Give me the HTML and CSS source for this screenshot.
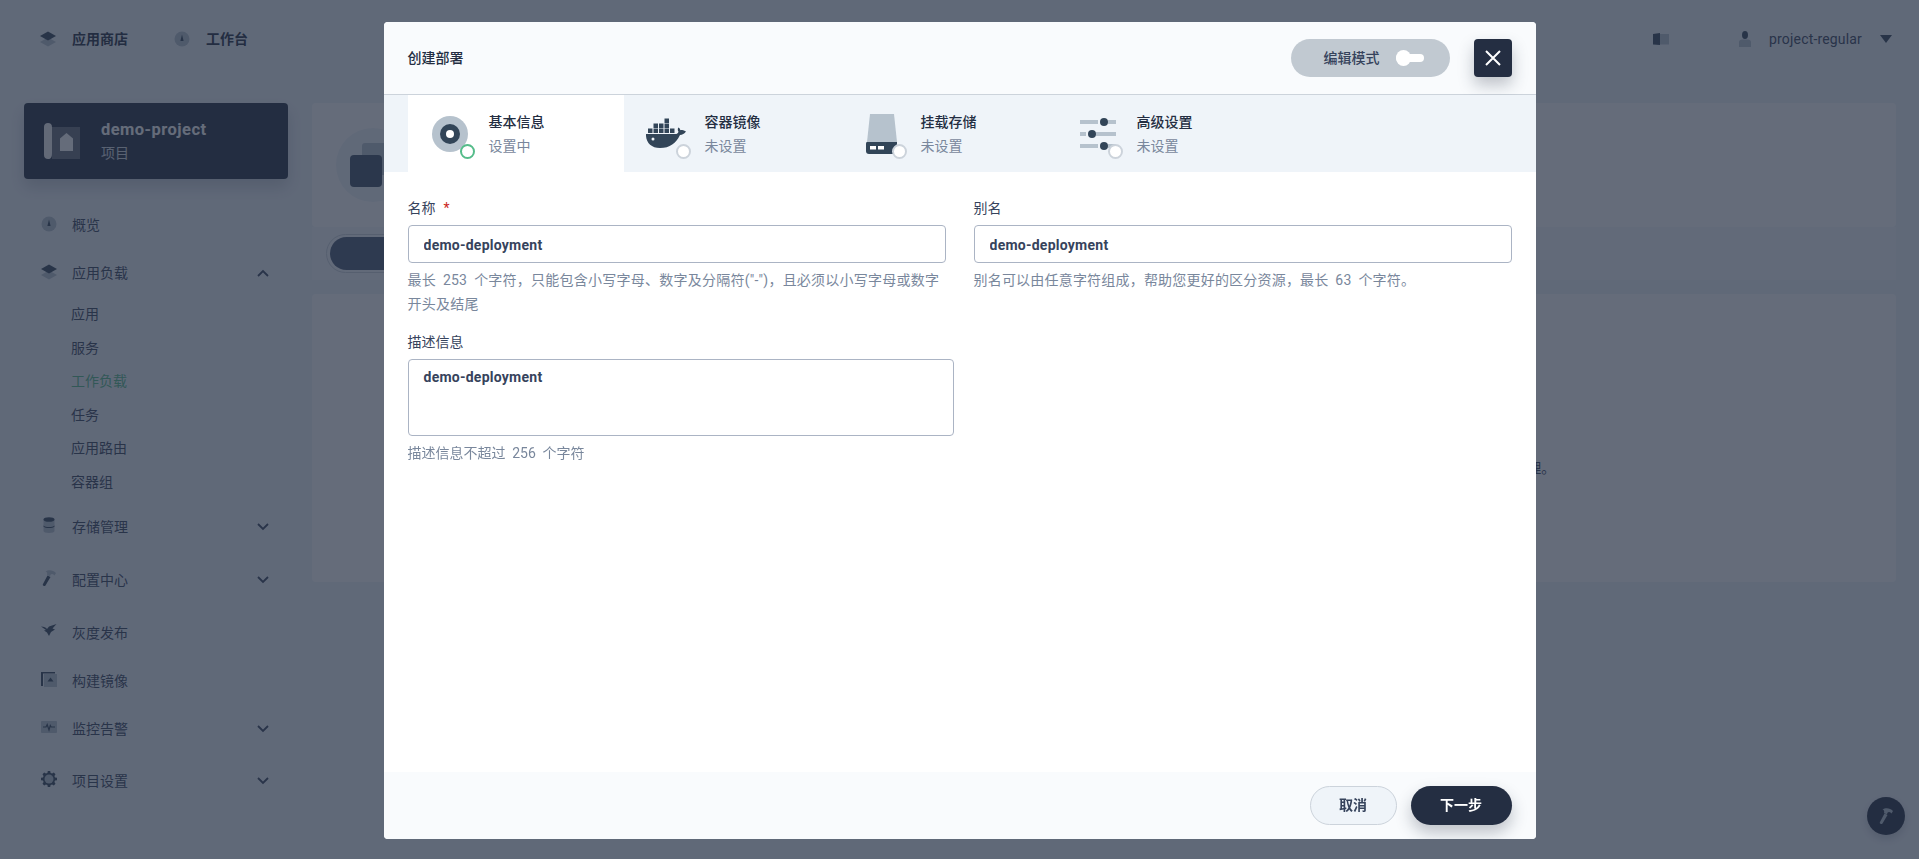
FILE: index.html
```html
<!DOCTYPE html>
<html lang="zh-CN">
<head>
<meta charset="utf-8">
<title>创建部署</title>
<link rel="stylesheet" href="styles.css">
</head>
<body>
<div class="page">
  <header class="topnav">
    <nav class="topnav-left">
      <a class="topnav-item"><svg class="ic16" viewBox="0 0 16 16"><path class="lt" d="M8 6.500l8 4.500-8 4.500-8-4.500z"/><path class="dk" d="M8 .5l8 4.500-8 4.500L0 5z"/></svg><span>应用商店</span></a>
      <a class="topnav-item second"><svg class="ic16" viewBox="0 0 16 16"><circle class="lt" cx="8" cy="8" r="7.500"/><path class="dk" d="M8 3.500l1.600 6.500H6.400z"/></svg><span>工作台</span></a>
    </nav>
    <div class="topnav-right">
      <svg class="ic16 book" viewBox="0 0 16 16"><path class="dk" d="M0 3l7-1v12l-7-.5z"/><path class="lt" d="M7 3h9v10.500H7z"/></svg>
      <svg class="ic16 user" viewBox="0 0 16 16"><ellipse class="dk" cx="8" cy="4" rx="3" ry="4"/><path class="lt" d="M2 11c0-1.500 1.500-2.500 3-2.500h6c1.500 0 3 1 3 2.500v5H2z"/></svg>
      <span class="username">project-regular</span>
      <svg class="caret" viewBox="0 0 12 8"><path class="dk" d="M0 0h12L6 8z"/></svg>
    </div>
  </header>
  <div class="content">
    <aside class="sidebar">
      <div class="project-card">
        <svg class="project-icon" viewBox="0 0 36 36"><path class="p2" d="M8 4h28v32H8z"/><path class="p1" d="M4 0c2.500 0 4 1.500 4 4v26H8c0 4-1 6-4 6-2.500 0-4-1.500-4-4V4C0 1.500 1.500 0 4 0z"/><path class="p3" d="M16 28V15.500l6.500-5.500 6.500 5.500V28z"/></svg>
        <div>
          <div class="project-name">demo-project</div>
          <div class="project-type">项目</div>
        </div>
      </div>
      <ul class="menu">
        <li class="item"><svg class="ic16" viewBox="0 0 16 16"><circle class="lt" cx="8" cy="8" r="7.500"/><path class="dk" d="M8 3.500l1.600 6.500H6.400z"/></svg><span>概览</span></li>
        <li class="item"><svg class="ic16" viewBox="0 0 16 16"><path class="lt" d="M8 6.500l8 4.500-8 4.500-8-4.500z"/><path class="dk" d="M8 .5l8 4.500-8 4.500L0 5z"/></svg><span>应用负载</span><svg class="chev" viewBox="0 0 12 8"><path d="M1 7l5-5 5 5"/></svg></li>
        <li class="subs">
          <a>应用</a><a>服务</a><a class="on">工作负载</a><a>任务</a><a>应用路由</a><a>容器组</a>
        </li>
        <li class="item more"><svg class="ic16" viewBox="0 0 16 16"><path class="lt" d="M2.500 3h11v11c0 1-2 2-5.500 2s-5.500-1-5.500-2z"/><ellipse class="dk" cx="8" cy="2.500" rx="5.500" ry="2.300"/><path class="dk" d="M2.500 8.500c1 1 3 1.500 5.500 1.500s4.500-.5 5.500-1.500v1c-1 1-3 1.500-5.500 1.500s-4.500-.5-5.500-1.500z"/></svg><span>存储管理</span><svg class="chev" viewBox="0 0 12 8"><path d="M1 1l5 5 5-5"/></svg></li>
        <li class="item more"><svg class="ic16" viewBox="0 0 16 16"><path class="dk" d="M6.500 5.500l3 1.500-5 8.500c-.5.7-1.300.7-2 .3s-.9-1.200-.5-1.800z"/><path class="lt" d="M4.500 1.500C7.500-.5 12-.3 15 3l-1.500 2.500C11.500 3.500 9.500 3.500 9 6.500L6 5C6.500 3 6 2 4.500 1.500z"/></svg><span>配置中心</span><svg class="chev" viewBox="0 0 12 8"><path d="M1 1l5 5 5-5"/></svg></li>
        <li class="item"><svg class="ic16" viewBox="0 0 16 16"><path class="dk" d="M0 3.500C3 3.500 5 4.500 6 6L8 3.500 15.500 1 11.500 5.500 14 6.500 10 9 8 13 6 9.500 3 7.500 5 7z"/></svg><span>灰度发布</span></li>
        <li class="item"><svg class="ic16" viewBox="0 0 16 16"><path class="dk" d="M0 1h14v1.500H2V15H0z"/><path class="lt" d="M3 3h13v13H3z"/><path class="dk" d="M9.500 6.500l3 4h-6z"/></svg><span>构建镜像</span></li>
        <li class="item more last"><svg class="ic16 wide" viewBox="0 0 16 12"><rect class="lt" width="16" height="12" rx="1"/><path class="ln" d="M2 6h3l1.200-2.500L8 9l1.300-4.500.9 1.500H14"/></svg><span>监控告警</span><svg class="chev" viewBox="0 0 12 8"><path d="M1 1l5 5 5-5"/></svg></li>
        <li class="item"><svg class="ic16" viewBox="0 0 16 16"><path class="dk" d="M6.800 0h2.400l.4 2 1.500.6 1.700-1.100 1.700 1.700-1.100 1.700.6 1.500 2 .4v2.400l-2 .4-.6 1.500 1.100 1.700-1.700 1.700-1.700-1.100-1.500.6-.4 2H6.800l-.4-2-1.500-.6-1.700 1.100-1.700-1.700 1.100-1.700-.6-1.500-2-.4V6.800l2-.4.6-1.500-1.100-1.700 1.700-1.700 1.700 1.100 1.500-.6z"/><circle class="lt" cx="8" cy="8" r="4.500"/></svg><span>项目设置</span><svg class="chev" viewBox="0 0 12 8"><path d="M1 1l5 5 5-5"/></svg></li>
      </ul>
    </aside>
    <main class="main">
      <section class="hero card">
        <svg class="hero-icon" viewBox="0 0 74 74"><circle class="bgc" cx="37" cy="37" r="37"/><rect class="lt" x="26" y="15" width="40" height="32" rx="3"/><rect class="dk2" x="14" y="27" width="32" height="32" rx="4"/></svg>
      </section>
      <div class="toolbar"><div class="pill-wrap"><div class="pill"></div></div></div>
      <section class="empty card">
        <p>部署（Deployment）为容器组提供声明式的定义方法，可用于无状态应用的创建、更新、回滚与弹性伸缩，帮助您高效地完成应用的日常运维管理。</p>
      </section>
    </main>
  </div>
  <button class="fab" type="button" aria-label="工具箱"><svg viewBox="0 0 16 16"><path d="M6.500 5.500l3 1.500-5 8.500c-.5.7-1.300.7-2 .3s-.9-1.200-.5-1.800z"/><path d="M4.500 1.500C7.500-.5 12-.3 15 3l-1.500 2.500C11.500 3.500 9.500 3.500 9 6.500L6 5C6.500 3 6 2 4.500 1.500z"/></svg></button>
</div>

<div class="overlay">
  <div class="modal">
    <div class="modal-head">
      <div class="modal-title">创建部署</div>
      <div class="edit-pill"><span>编辑模式</span><i class="toggle"></i></div>
      <button class="close" type="button" aria-label="关闭"><svg viewBox="0 0 18 18"><path d="M2 2l14 14M16 2L2 16"/></svg></button>
    </div>
    <div class="steps">
      <div class="step active">
        <div class="step-icon">
          <svg viewBox="0 0 40 40" width="40" height="40"><circle class="lt" cx="20" cy="20" r="18"/><circle class="dk3" cx="20" cy="20" r="10"/><circle class="wh" cx="20" cy="20" r="4"/></svg>
          <i class="ring go"></i>
        </div>
        <div class="step-text"><b>基本信息</b><span>设置中</span></div>
      </div>
      <div class="step">
        <div class="step-icon">
          <svg viewBox="0 0 40 40" width="40" height="40"><path class="dk3" d="M0 20h29.500c1.300 0 2.500-.6 3-2.300-.8-1-1-2.800-.2-4.200 1.200.4 1.800 1.500 2 2.700 1-.3 2.700-.2 5.700 1.300-1.500 2.200-3.700 3.300-6 3.400C30 29 24 34 14 34 5 34-.5 28 0 20z"/><circle class="wh2" cx="7" cy="25" r="1.500"/><path class="dk3" d="M2 14.500h4.500v4.500H2zM7.500 14.500H12v4.500H7.500zM13 14.500h4.500v4.500H13zM18.500 14.500H23v4.500h-4.500zM24 14.500h4.500v4.500H24zM7.500 9.500H12v4.500H7.500zM13 9.500h4.500v4.500H13zM18.500 9.500H23v4.500h-4.500zM18.500 4.500H23V9h-4.500z"/></svg>
          <i class="ring"></i>
        </div>
        <div class="step-text"><b>容器镜像</b><span>未设置</span></div>
      </div>
      <div class="step">
        <div class="step-icon">
          <svg viewBox="0 0 40 40" width="40" height="40"><path class="lt" d="M8 0h24l3 28H5z"/><path class="dk3" d="M5 28h30v12H7c-2 0-3-1-3-3v-6c0-2 0-3 1-3z"/><path class="wh" d="M8 32h6v3.500H8zM16 32h6v3.500h-6z"/></svg>
          <i class="ring"></i>
        </div>
        <div class="step-text"><b>挂载存储</b><span>未设置</span></div>
      </div>
      <div class="step">
        <div class="step-icon">
          <svg viewBox="0 0 40 40" width="40" height="40"><path class="lt" d="M2 6h18v4H2zM30 6h8v4h-8zM2 18h6v4H2zM18 18h20v4H18zM2 30h18v4H2zM30 30h8v4h-8z"/><circle class="dk3" cx="26" cy="8" r="4"/><circle class="dk3" cx="14" cy="20" r="4"/><circle class="dk3" cx="26" cy="32" r="4"/></svg>
          <i class="ring"></i>
        </div>
        <div class="step-text"><b>高级设置</b><span>未设置</span></div>
      </div>
    </div>
    <form class="form">
      <div class="row">
        <div class="field">
          <label class="label" for="f-name">名称<em>*</em></label>
          <input class="input" id="f-name" type="text" value="demo-deployment">
          <p class="hint name-hint">最长 253 个字符，只能包含小写字母、数字及分隔符("-")，且必须以小写字母或数字开头及结尾</p>
        </div>
        <div class="field">
          <label class="label" for="f-alias">别名</label>
          <input class="input" id="f-alias" type="text" value="demo-deployment">
          <p class="hint alias-hint">别名可以由任意字符组成，帮助您更好的区分资源，最长 63 个字符。</p>
        </div>
      </div>
      <div class="field desc">
        <label class="label" for="f-desc">描述信息</label>
        <textarea class="textarea" id="f-desc">demo-deployment</textarea>
        <p class="hint">描述信息不超过 256 个字符</p>
      </div>
    </form>
    <div class="modal-foot">
      <button class="btn ghost" type="button">取消</button>
      <button class="btn primary" type="button">下一步</button>
    </div>
  </div>
</div>
</body>
</html>
```

FILE: styles.css
```css
* { box-sizing: border-box; }
html, body { margin: 0; height: 100%; overflow: hidden; }
body {
  background: #eff4f9;
  color: #36435c;
  font-family: Roboto, "Noto Sans CJK SC", sans-serif;
  font-size: 14px;
  line-height: 20px;
}
p, ul { margin: 0; padding: 0; }
ul { list-style: none; }
svg { display: block; flex: none; }

.lt { fill: #b6c2cd; }
.dk { fill: #324558; }
.dk2 { fill: #3e4e64; }
.dk3 { fill: #324558; }
.wh { fill: #fff; }
.wh2 { fill: #eff4f9; }
.ln { fill: none; stroke: #324558; stroke-width: 1.2; }
.bgc { fill: #eff4f9; }
.ic16 { width: 16px; height: 16px; }
.ic16.wide { height: 12px; }

.page { position: relative; height: 100vh; display: flex; flex-direction: column; }
.topnav { height: 78px; flex: none; display: flex; align-items: flex-start; justify-content: space-between; padding-top: 29px; }
.topnav-left { display: flex; padding-left: 40px; }
.topnav-item { display: flex; align-items: center; gap: 16px; font-weight: 700; color: #242e42; }
.topnav-item.second { margin-left: 46px; }
.topnav-right { display: flex; align-items: center; padding-right: 27px; color: #36435c; }
.book { margin-right: 68px; }
.user { margin-right: 16px; }
.username { margin-right: 18px; letter-spacing: .17px; }
.caret { width: 12px; height: 8px; }

.content { display: flex; flex: 1; min-height: 0; padding-top: 25px; }
.sidebar { width: 288px; flex: none; padding-left: 24px; }
.project-card { height: 76px; background: #242e42; border-radius: 4px; display: flex; align-items: center; padding-left: 20px; gap: 21px; box-shadow: 0 8px 16px rgba(36,46,66,.2); }
.project-icon { width: 36px; height: 36px; }
.p1 { fill: #fff; opacity: .95; }
.p2 { fill: #fff; opacity: .3; }
.p3 { fill: #fff; }
.project-name { font-size: 16.500px; font-weight: 700; color: #fff; line-height: 24px; letter-spacing: .45px; padding-top: 1px; }
.project-type { color: #d8dee5; line-height: 24px; margin-top: -1px; }

.menu { margin-top: 22px; }
.item { height: 48px; display: flex; align-items: center; padding-left: 17px; padding-right: 19px; }
.item .ic16 { margin-right: 15px; margin-top: -3px; }
.item.more { margin-bottom: 5px; }
.item.more.last { margin-bottom: 4px; }
.chev { width: 12px; height: 8px; margin-left: auto; }
.chev path { fill: none; stroke: #36435c; stroke-width: 1.800; }
.subs { display: flex; flex-direction: column; padding-left: 47px; padding-top: 1px; margin-bottom: 3px; }
.subs a { height: 33.600px; line-height: 33.600px; }
.subs a.on { color: #55bc8a; }

.main { flex: 1; min-width: 0; margin: 0 23px 0 24px; }
.card { background: #fff; border-radius: 4px; }
.hero { height: 124px; padding: 25px 24px; }
.hero-icon { width: 74px; height: 74px; }
.toolbar { height: 53px; padding: 7px 14px 0; margin-bottom: 14px; background: #f3f7fb; }
.pill-wrap { width: 300px; height: 39px; padding: 2px 3px; border: 1px solid #ccd3db; border-radius: 20px; }
.pill { height: 33px; border-radius: 17px; background: #485873; }
.empty { height: 288px; display: flex; align-items: center; justify-content: center; padding: 60px 12px 0 0; color: #36435c; }
.empty p { white-space: nowrap; }
.fab { position: absolute; right: 14px; bottom: 24px; width: 38px; height: 38px; border: 0; border-radius: 50%; padding: 11px; background: #242e42; box-shadow: 0 4px 8px rgba(36,46,66,.2); }
.fab path { fill: #b6c2cd; }

.overlay { position: fixed; inset: 0; background: rgba(35,45,65,.7); display: flex; justify-content: center; align-items: flex-start; padding-top: 22px; }
.modal { width: 1152px; height: 817px; background: #fff; border-radius: 4px; display: flex; flex-direction: column; overflow: hidden; color: #36435c; }
.modal-head { height: 73px; flex: none; display: flex; align-items: center; padding: 0 24px; background: #f9fbfd; border-bottom: 1px solid #ccd3db; }
.modal-title { font-weight: 500; color: #242e42; margin-right: auto; }
.edit-pill { width: 159px; height: 38px; border-radius: 19px; background: #c1c9d1; display: flex; align-items: center; padding-left: 33px; gap: 16px; font-weight: 500; color: #36435c; margin-right: 24px; }
.toggle { position: relative; display: block; width: 28px; height: 8px; background: #fff; border-radius: 4px; }
.toggle::before { content: ""; position: absolute; left: 0; top: -4px; width: 15px; height: 16px; border-radius: 50%; background: #fff; }
.close { width: 38px; height: 38px; padding: 10px; border: 0; border-radius: 4px; background: #242e42; box-shadow: 0 8px 16px rgba(36,46,66,.28); }
.close path { stroke: #fff; stroke-width: 2; fill: none; }

.steps { height: 77px; flex: none; display: flex; padding-left: 24px; background: #eff4f9; }
.step { width: 216px; display: flex; align-items: center; padding-left: 24px; gap: 19px; }
.step.active { background: #fff; }
.step-icon { position: relative; width: 40px; height: 40px; margin-left: -2px; }
.ring { position: absolute; right: -5px; bottom: -5px; width: 15px; height: 15px; border-radius: 50%; border: 2px solid #ccd3db; background: #fff; }
.ring.go { border-color: #55bc8a; }
.step-text { display: flex; flex-direction: column; gap: 4px; }
.step-text b { font-weight: 500; color: #242e42; }
.step-text span { color: #79879c; }

.form { flex: 1; padding: 26px 24px 0; }
.row { display: grid; grid-template-columns: 538px 538px; gap: 28px; }
.label { display: block; margin-bottom: 7px; color: #36435c; }
.label em { font-style: normal; color: #ca2621; margin-left: 8px; }
.input, .textarea { display: block; width: 100%; font: 700 14px/20px Roboto, "Noto Sans CJK SC", sans-serif; letter-spacing: .25px; color: #36435c; background: #fff; border: 1px solid #abb4c4; border-radius: 4px; outline: 0; }
.input { height: 38px; padding: 2px 15px 0; }
.hint { margin-top: 5px; line-height: 24px; color: #79879c; word-spacing: 3.200px; }
.name-hint { letter-spacing: .24px; }
.alias-hint { letter-spacing: .2px; }
.desc { width: 546px; margin-top: 16px; }
.textarea { height: 77px; padding: 7px 15px 5px; resize: none; }

.modal-foot { height: 67px; flex: none; display: flex; justify-content: flex-end; gap: 14px; align-items: flex-start; padding: 14px 24px 0 0; background: #f9fbfd; }
.btn { height: 39px; padding: 0 0 2px; border-radius: 20px; font: 700 14px/20px Roboto, "Noto Sans CJK SC", sans-serif; }
.ghost { width: 87px; background: #eff4f9; border: 1px solid #ccd3db; color: #36435c; }
.primary { width: 101px; background: #242e42; border: 0; color: #fff; box-shadow: 0 8px 16px rgba(36,46,66,.28); }
```
